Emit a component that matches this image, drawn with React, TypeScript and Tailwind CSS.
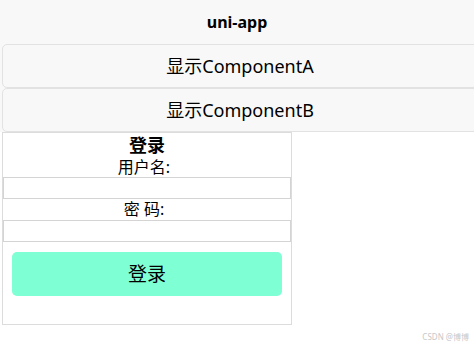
import React from "react";

export default function App() {
  return (
    <div
      className="relative w-[474px] h-[345px] overflow-hidden bg-white text-black"
      style={{ fontFamily: '"Noto Sans", "Noto Sans CJK SC", sans-serif' }}
    >
      <div className="h-[44px] bg-[#f8f8f8] flex items-center justify-center text-[16px] font-bold">
        uni-app
      </div>
      <div className="bg-[#f8f8f8] pl-[2px] flex flex-col">
        <button className="h-[44px] w-[476px] border border-[#e2e2e2] rounded-[5px] bg-[#f8f8f8] text-[18px] flex items-center justify-center">
          显示ComponentA
        </button>
        <button className="h-[44px] w-[476px] border border-[#e2e2e2] rounded-[5px] bg-[#f8f8f8] text-[18px] flex items-center justify-center">
          显示ComponentB
        </button>
      </div>
      <div className="ml-[2px] w-[290px] h-[193px] border border-[#dcdcdc] flex flex-col items-center">
        <div className="text-[18px] font-bold leading-[24px]">登录</div>
        <div className="text-[16px] leading-[20px] pr-[6px]">用户名:</div>
        <input className="w-full h-[22px] border border-[#d4d4d4] outline-none" />
        <div className="text-[16px] leading-[21px] pr-[6px]">密 码:</div>
        <input className="w-full h-[22px] border border-[#d4d4d4] outline-none" />
        <button className="mt-[10px] w-[270px] h-[44px] rounded-[5px] bg-[#7fffd4] text-[19px] flex items-center justify-center">
          登录
        </button>
      </div>
      <div className="absolute right-[5px] bottom-[4px] text-[8px] text-[#c8c8c8] leading-none">
        CSDN @博博
      </div>
    </div>
  );
}
